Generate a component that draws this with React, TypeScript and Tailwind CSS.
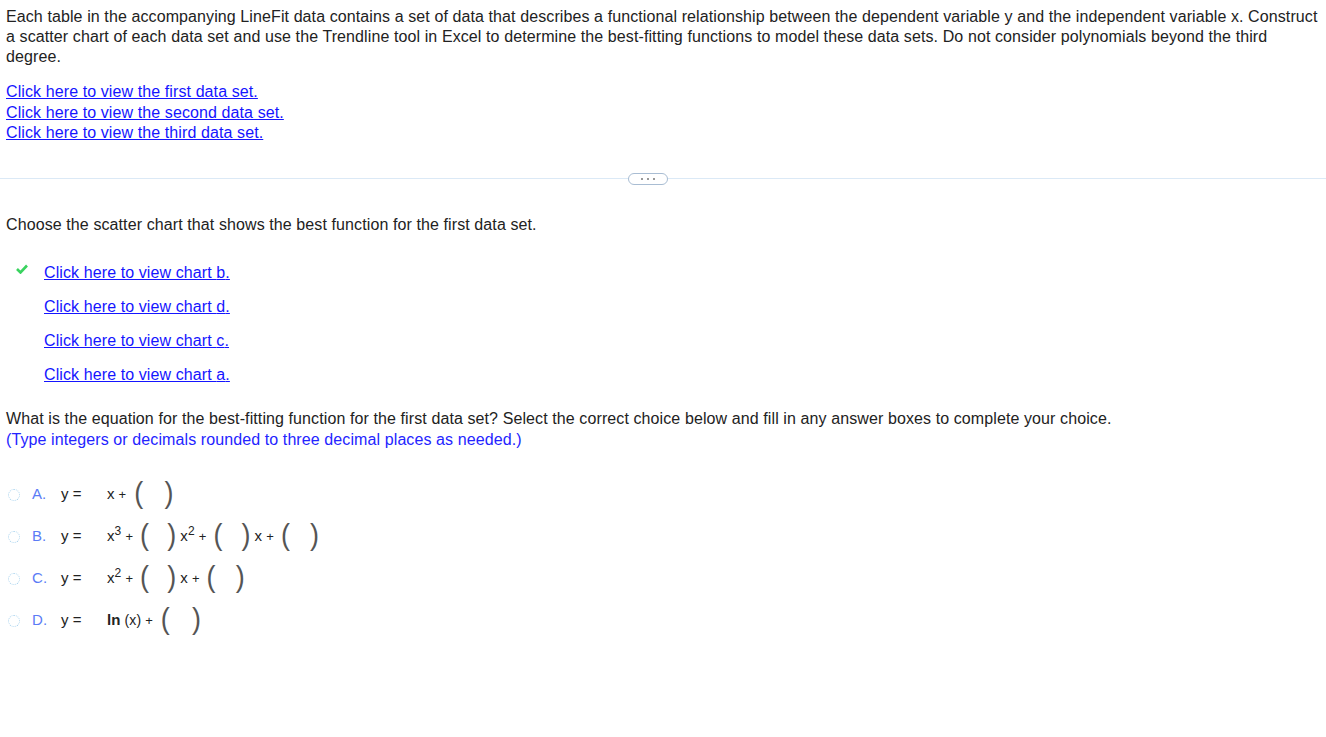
import React from "react";

const font = { fontFamily: '"Liberation Sans", Arial, sans-serif' };

function Paren({ gap = 21 }: { gap?: number }) {
  return (
    <span className="inline-flex items-center text-[#555]">
      <span className="text-[27px] leading-none inline-block -mt-[3px] scale-y-[1.12]">(</span>
      <span className="inline-block" style={{ width: gap }} />
      <span className="text-[27px] leading-none inline-block -mt-[3px] scale-y-[1.12]">)</span>
    </span>
  );
}

function Plus({ after = 8 }: { after?: number }) {
  return (
    <span className="ml-[4px] text-[13px]" style={{ marginRight: after }}>
      +
    </span>
  );
}

function Option({ letter, children }: { letter: string; children: React.ReactNode }) {
  return (
    <div className="flex items-center h-[42px]">
      <span className="ml-[8px] w-[12px] h-[12px] rounded-full border border-dotted border-[#a9d3ee]" />
      <span className="ml-[12px] w-[29px] text-[15px] text-[#5b7cf6]">{letter}.</span>
      <span className="w-[46px] text-[15px] text-[#222]">y =</span>
      <span className="flex items-center text-[15px] text-[#222]">{children}</span>
    </div>
  );
}

export default function App() {
  return (
    <div className="w-[1326px] h-[737px] bg-white text-[#222] tracking-[0.1px]" style={font}>
      <div className="px-[6px] pt-[7px]">
        <p className="text-[16px] leading-[20px] whitespace-nowrap">
          Each table in the accompanying LineFit data contains a set of data that describes a functional relationship between the dependent variable y and the independent variable x. Construct
          <br />
          a scatter chart of each data set and use the Trendline tool in Excel to determine the best-fitting functions to model these data sets. Do not consider polynomials beyond the third
          <br />
          degree.
        </p>
        <div className="mt-[15px] flex flex-col text-[16px] leading-[20.5px] text-[#1515ff]">
          <a className="underline w-fit">Click here to view the first data set.</a>
          <a className="underline w-fit">Click here to view the second data set.</a>
          <a className="underline w-fit">Click here to view the third data set.</a>
        </div>
      </div>
      <div className="relative mt-[28px] h-[14px] flex items-center">
        <div className="w-full h-px bg-[#dbe9f6]" />
        <div className="absolute left-[628px] top-[1px] w-[40px] h-[12px] rounded-[6px] border border-[#a9bdd3] bg-white flex items-center justify-center gap-[4px]">
          <span className="w-[2px] h-[2px] bg-[#999]" />
          <span className="w-[2px] h-[2px] bg-[#999]" />
          <span className="w-[2px] h-[2px] bg-[#999]" />
        </div>
      </div>
      <div className="px-[6px]">
        <p className="mt-[29px] text-[16px] leading-[20px]">Choose the scatter chart that shows the best function for the first data set.</p>
        <div className="mt-[28px] flex flex-col gap-[14px] text-[16px] leading-[20px] text-[#1515ff]">
          {["b", "d", "c", "a"].map((l, i) => (
            <div key={l} className="flex items-center relative">
              {i === 0 && (
                <svg className="absolute left-[10px] top-[1px]" width="12" height="10" viewBox="0 0 12 10">
                  <path d="M1 5 L4.5 8.5 L11 1.5" fill="none" stroke="#3ad35f" strokeWidth="2.6" />
                </svg>
              )}
              <a className="ml-[38px] underline">Click here to view chart {l}.</a>
            </div>
          ))}
        </div>
        <p className="mt-[23px] text-[16px] leading-[21px]">
          What is the equation for the best-fitting function for the first data set? Select the correct choice below and fill in any answer boxes to complete your choice.
        </p>
        <p className="text-[16px] leading-[21px] text-[#2424ff]">(Type integers or decimals rounded to three decimal places as needed.)</p>
      </div>
      <div className="mt-[24px] flex flex-col">
        <Option letter="A">
          <span>x</span>
          <Plus />
          <Paren gap={21} />
        </Option>
        <Option letter="B">
          <span>x<sup className="text-[12px]">3</sup></span>
          <Plus after={7} />
          <Paren gap={18} />
          <span className="ml-[4px]">x<sup className="text-[12px]">2</sup></span>
          <Plus after={7} />
          <Paren gap={19} />
          <span className="ml-[4px]">x</span>
          <Plus after={7} />
          <Paren gap={20} />
        </Option>
        <Option letter="C">
          <span>x<sup className="text-[12px]">2</sup></span>
          <Plus after={7} />
          <Paren gap={18} />
          <span className="ml-[4px]">x</span>
          <Plus after={7} />
          <Paren gap={20} />
        </Option>
        <Option letter="D">
          <span className="font-bold">ln</span>
          <span className="ml-[4px] text-[14px]">(x)</span>
          <Plus />
          <Paren gap={22} />
        </Option>
      </div>
    </div>
  );
}
